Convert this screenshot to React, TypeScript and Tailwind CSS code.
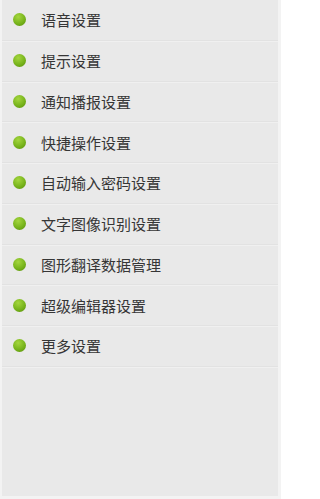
const items = [
  '语音设置',
  '提示设置',
  '通知播报设置',
  '快捷操作设置',
  '自动输入密码设置',
  '文字图像识别设置',
  '图形翻译数据管理',
  '超级编辑器设置',
  '更多设置',
];

export default function App() {
  return (
    <div
      className="h-[499px] w-[281px] bg-[#f3f3f3] pl-[2px] pr-[3px] pb-[3px]"
      style={{ fontFamily: '"Noto Sans CJK SC", "Liberation Sans", sans-serif' }}
    >
      <div className="h-full bg-[#e9e9e9]">
        {items.map((label) => (
          <div
            key={label}
            className="flex h-[40.75px] items-center border-b border-[#e2e2e2] shadow-[0_1px_0_#f0f0f0]"
          >
            <span className="ml-[11px] h-[13px] w-[13px] rounded-full bg-[radial-gradient(circle_at_40%_30%,#a4d63e_0%,#78b41c_55%,#548c06_100%)]" />
            <span className="ml-[15px] text-[15px] leading-none text-[#363636]">{label}</span>
          </div>
        ))}
      </div>
    </div>
  );
}
